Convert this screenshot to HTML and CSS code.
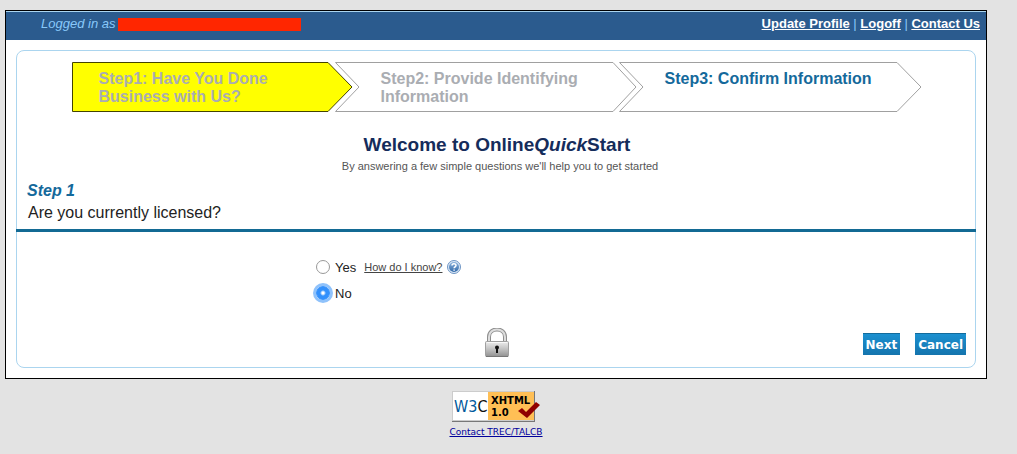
FILE: index.html
```
<!DOCTYPE html>
<html lang="en">
<head>
  <meta charset="UTF-8">
  <title>Online QuickStart</title>
  <link rel="stylesheet" href="styles.css">
</head>
<body>
  <div class="page">
    <header class="topbar">
      <div class="user">Logged in as <span class="username"></span></div>
      <nav class="links"><a href="#">Update Profile</a> | <a href="#">Logoff</a> | <a href="#">Contact Us</a></nav>
    </header>

    <main class="panel">
      <ol class="steps">
        <li class="step active">
          <svg width="281" height="50"><path d="M.5 .5H256L280 25L256 49.5H.5Z"/></svg>
          <span>Step1: Have You Done Business with Us?</span>
        </li>
        <li class="step">
          <svg width="302" height="50"><path d="M.5 .5H278L301 25L278 49.5H.5L24 25Z"/></svg>
          <span>Step2: Provide Identifying Information</span>
        </li>
        <li class="step last">
          <svg width="302" height="50"><path d="M.5 .5H278L302 25L278 49.5H.5L24 25Z"/></svg>
          <span>Step3: Confirm Information</span>
        </li>
      </ol>

      <h1>Welcome to Online<em>Quick</em>Start</h1>
      <p class="intro">By answering a few simple questions we'll help you to get started</p>

      <h2>Step 1</h2>
      <p class="question" id="question">Are you currently licensed?</p>

      <form>
        <div class="answers" role="radiogroup" aria-labelledby="question">
          <div class="answer">
            <input type="radio" name="licensed" id="yes">
            <label for="yes">Yes</label>
            <a class="help" href="#">How do I know?</a>
            <svg class="help-icon" width="14" height="14" viewBox="0 0 14 14">
              <defs>
                <linearGradient id="helpFill" x1="0" y1="0" x2="0" y2="1">
                  <stop offset="0" stop-color="#8db4dd"/>
                  <stop offset="1" stop-color="#326aaa"/>
                </linearGradient>
              </defs>
              <circle cx="7" cy="7" r="6.5" fill="#dce8f5" stroke="#6d94c4"/>
              <circle cx="7" cy="7" r="5" fill="url(#helpFill)"/>
              <path d="M5 5.6C5 3.2 9 3.2 9 5.4C9 6.8 7.1 6.8 7.1 8.2M7.1 9.4V10.8" fill="none" stroke="#fff" stroke-width="1.5"/>
            </svg>
          </div>
          <div class="answer">
            <input type="radio" name="licensed" id="no" checked>
            <label for="no">No</label>
          </div>
        </div>

        <div class="actions">
          <svg class="lock" width="24" height="30" viewBox="0 0 24 30">
            <defs>
              <linearGradient id="lockFill" x1="0" y1="0" x2="0" y2="1">
                <stop offset="0" stop-color="#eee"/>
                <stop offset=".5" stop-color="#c2c2c2"/>
                <stop offset="1" stop-color="#929292"/>
              </linearGradient>
            </defs>
            <path d="M4 15V9C4-1 20-1 20 9V15" fill="none" stroke="#8d8d8d" stroke-width="4"/>
            <path d="M4 15V9C4-1 20-1 20 9V15" fill="none" stroke="#ddd" stroke-width="2"/>
            <rect x=".5" y="13.5" width="23" height="15" rx="1" fill="url(#lockFill)" stroke="#a0a0a0"/>
            <path d="M1 28.5H23" stroke="#777"/>
            <path d="M2 14.5H22" stroke="#f8f8f8"/>
            <circle cx="12" cy="19.5" r="2" fill="#111"/>
            <path d="M12 20V25" stroke="#111" stroke-width="2"/>
          </svg>
          <div class="buttons">
            <button type="submit">Next</button>
            <button type="button">Cancel</button>
          </div>
        </div>
      </form>
    </main>
  </div>

  <footer>
    <a class="badge" href="#" aria-label="Valid XHTML 1.0">
      <svg width="88" height="31" viewBox="0 0 88 31">
        <rect x="0" y="0" width="83" height="31" fill="#777"/>
        <rect x="0" y="0" width="82" height="30" fill="#ccc"/>
        <rect x="1" y="1" width="35" height="28" fill="#fff"/>
        <rect x="36" y="1" width="46" height="28" fill="#ffbf55"/>
        <text class="w3" x="2" y="21">W3<tspan class="w3-c">C</tspan></text>
        <text class="xhtml" x="39" y="13">XHTML</text>
        <text class="xhtml" x="39" y="25">1.0</text>
        <path d="M66 20L70 17L74 21L84 11L88 14L75 27Z" fill="#900000"/>
      </svg>
    </a>
    <a class="contact" href="#">Contact TREC/TALCB</a>
  </footer>
</body>
</html>
```
FILE: styles.css
```
body {
  margin: 0;
  background: #e3e3e3;
  color: #222;
  font-family: "Liberation Sans", Arial, sans-serif;
}

.page {
  margin: 10px 30px 0 5px;
  border: 1px solid #000;
  background: #fff;
}

/* header bar */
.topbar {
  display: flex;
  justify-content: space-between;
  height: 28px;
  padding: 0 6px 0 35px;
  border-top: 1px solid #abd5ef;
  background: #2b5b8e;
  color: #88c8fa;
  font-size: 13px;
  line-height: 24px;
}
.user { display: flex; align-items: center; gap: 3px; height: 24px; font-style: italic; }
.username { width: 183px; height: 13px; background: #ff2600; }
.links a { color: #fff; font-weight: bold; }

.panel {
  margin: 10px;
  padding: 11px 0 9px;
  border: 1px solid #abd5ef;
  border-radius: 8px;
}

/* progress arrows, each one overlaps the next by 18px */
.steps {
  display: flex;
  justify-content: center;
  margin: 0;
  padding: 0;
  list-style: none;
  color: #aaadb2;
  font-size: 16px;
  font-weight: bold;
  line-height: 18px;
}
.step { display: grid; grid-template-columns: 302px; margin-right: -18px; }
.step.active { grid-template-columns: 281px; }
.step.last { margin-right: 0; color: #14699b; }
.step svg, .step span { grid-area: 1 / 1; }
.step span { padding: 8px 44px 0 46px; }
.step.active span { padding-left: 27px; }
.step path { fill: #fff; stroke: #a0a0a0; }
.step.active path { fill: #ff0; stroke: #444400; }

h1 {
  margin: 21px 0 0;
  padding-left: 2px;
  color: #152c5b;
  font-size: 19px;
  line-height: 24px;
  text-align: center;
}
.intro {
  margin: 2px 0 0;
  padding-left: 8px;
  color: #555;
  font-size: 11px;
  line-height: 14px;
  text-align: center;
}
h2 {
  margin: 8px 0 0 10px;
  color: #14699b;
  font-size: 16px;
  font-style: italic;
  line-height: 20px;
}
.question {
  margin: 0 -1px;
  padding: 2px 12px 6px;
  border-bottom: 3px solid #136a94;
  font-size: 16px;
  line-height: 20px;
}

.answers { padding: 22px 0 0 299px; }
.answer {
  display: flex;
  align-items: center;
  height: 26px;
  font-size: 13px;
}
.answer input {
  appearance: none;
  width: 14px;
  height: 14px;
  margin: 0 5px 0 0;
  border: 1px solid #999;
  border-radius: 50%;
  background: #fff;
}
.answer input:checked {
  border-color: #3290fc;
  background: radial-gradient(circle, #fff 1px, #3290fc 3px);
  box-shadow: 0 0 0 3px #8fc2fb;
}
.help { margin: 0 5px 0 8px; color: #444; font-size: 11px; }

.actions {
  display: grid;
  grid-template-columns: 1fr auto 1fr;
  align-items: center;
  margin-top: 22px;
  padding: 0 9px 0 10px;
}
.lock { grid-column: 2; }
.buttons { display: flex; justify-content: flex-end; gap: 15px; margin-top: 2px; }
button {
  height: 22px;
  padding: 0 3px;
  border: 0;
  border-top: 1px solid #126b9c;
  background: linear-gradient(#1b90d0, #1474ad);
  color: #fff;
  font: bold 12px "DejaVu Sans", Verdana, sans-serif;
}

footer {
  display: flex;
  flex-direction: column;
  align-items: center;
  margin: 12px 30px 0 5px;
}
.badge { height: 31px; }
.contact {
  margin-top: 4px;
  color: #00009c;
  font: 9px/12px "DejaVu Sans", "Lucida Grande", sans-serif;
}
.w3 { fill: #005a9c; font: 16px "DejaVu Sans Condensed", "Liberation Sans", sans-serif; }
.w3-c { fill: #111; }
.xhtml { fill: #000; font: bold 10px "DejaVu Sans", sans-serif; }
```
